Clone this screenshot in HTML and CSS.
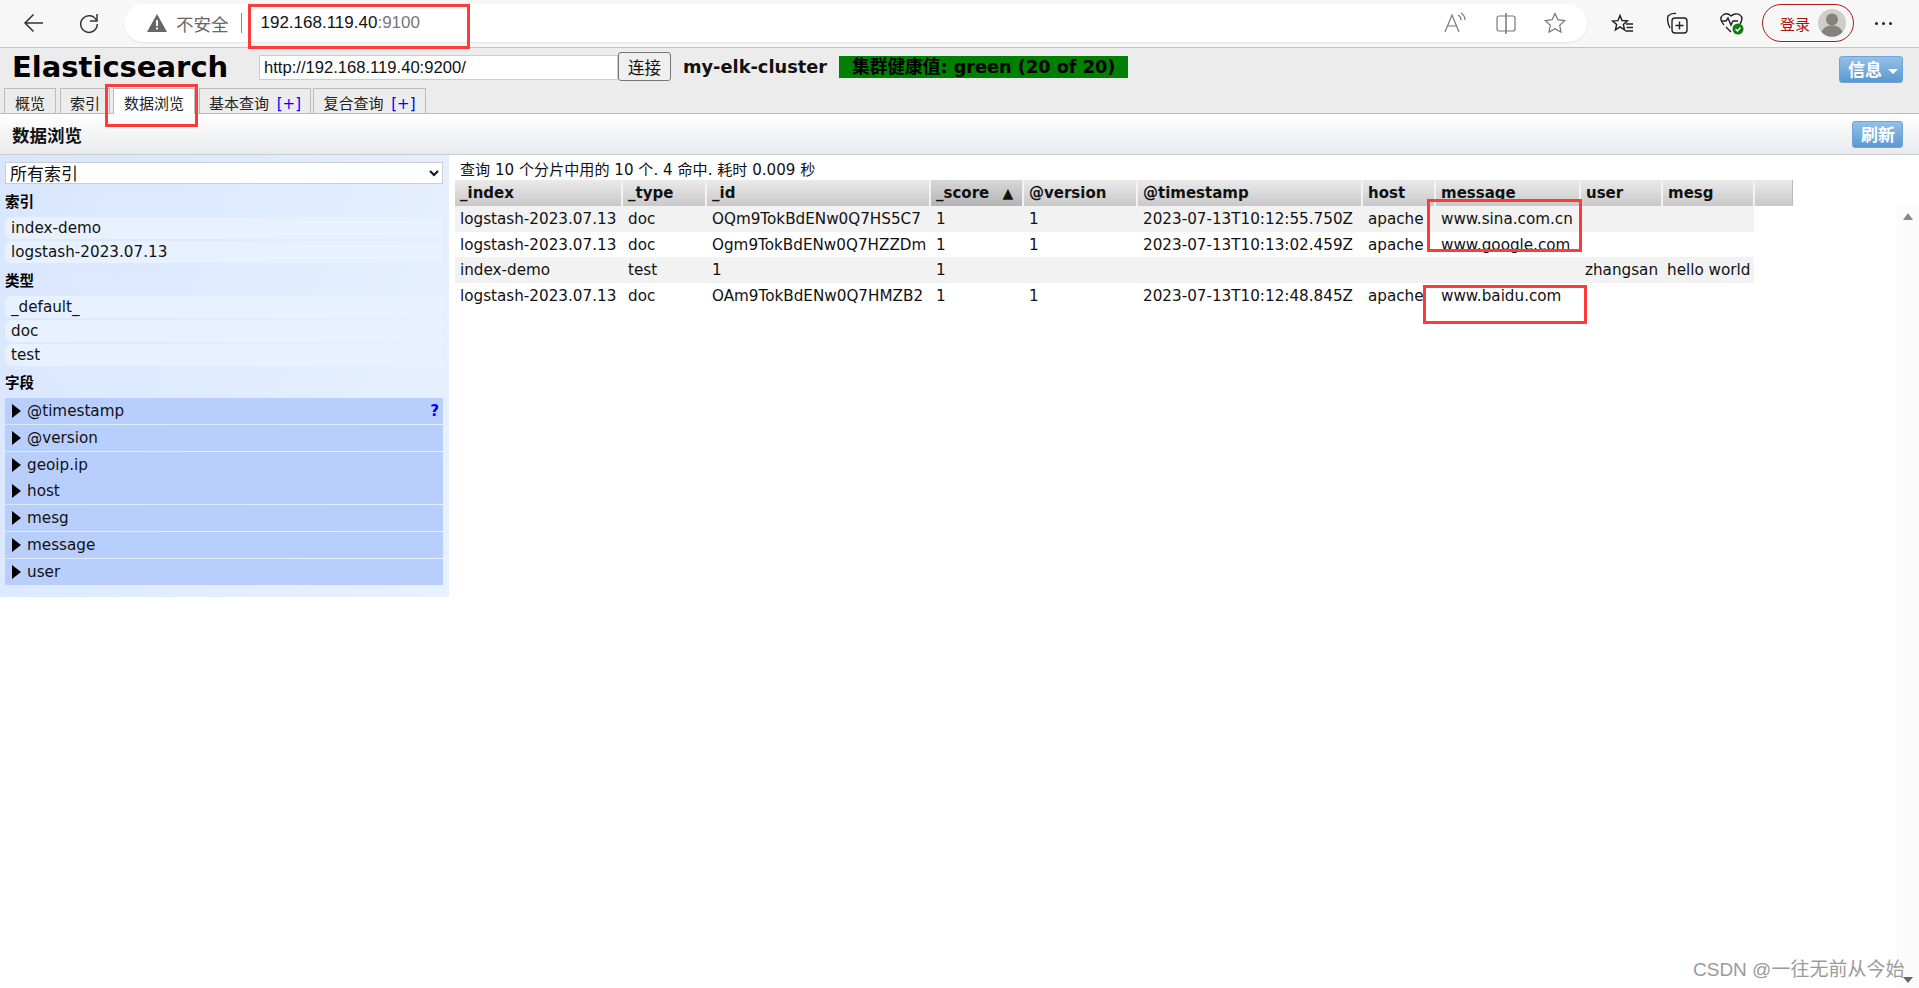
FILE: index.html
```html
<!DOCTYPE html>
<html lang="zh-CN">
<head>
    <meta charset="UTF-8">
    <title>Elasticsearch Head</title>
    <link rel="stylesheet" href="styles.css">
</head>
<body>

    <div class="browser-bar">
        <button class="tool-btn back-btn" aria-label="back">
            <svg width="24" height="24" viewBox="0 0 24 24" fill="none" stroke="#333" stroke-width="1.5"><path d="M21 12H3.500M11.500 3.500L3 12l8.500 8.500"/></svg>
        </button>
        <button class="tool-btn reload-btn" aria-label="reload">
            <svg width="24" height="24" viewBox="0 0 24 24" fill="none" stroke="#333" stroke-width="1.5"><path d="M19.500 9.500A8.300 8.300 0 1 0 20.300 13"/><path d="M20 3v7h-7"/></svg>
        </button>
        <div class="address">
            <svg class="warn-icon" width="20" height="18" viewBox="0 0 20 18"><path fill="#666" d="M10 0l10 18H0z"/><path fill="#f7f7f7" d="M9 6h2v6H9zM9 13.500h2v2H9z"/></svg>
            <span class="not-safe">不安全</span>
            <span class="addr-sep"></span>
            <span class="addr-host">192.168.119.40</span><span class="addr-port">:9100</span>
            <div class="addr-icons">
                <svg width="26" height="24" viewBox="0 0 26 24" fill="none" stroke="#777" stroke-width="1.2"><path d="M2 21L9 4l7 17M4.500 15h9"/><path d="M15 4c2 1 3 3 3 5M18 2c2.500 1.500 4 4 4 7"/></svg>
                <svg width="24" height="24" viewBox="0 0 24 24" fill="none" stroke="#777" stroke-width="1.2"><rect x="3" y="5" width="18" height="15" rx="2"/><path d="M12 2v21" stroke-width="1.500"/></svg>
                <svg width="24" height="24" viewBox="0 0 24 24" fill="none" stroke="#777" stroke-width="1.2"><path d="M12 2.500l2.900 6.200 6.800.9-5 4.700 1.300 6.700-6-3.300-6 3.300 1.300-6.700-5-4.700 6.800-.9z"/></svg>
            </div>
        </div>
        <div class="bar-icons">
            <svg width="24" height="24" viewBox="0 0 24 24" fill="none" stroke="#222" stroke-width="1.4"><path d="M9 2.500l2 5 5.500.4-4.200 3.600 1.300 5.400-4.600-3-4.600 3 1.300-5.400L1.500 8l5.500-.4zM15 11h7M15.500 14.500H22M14.500 18H22" transform="translate(0 2)"/></svg>
            <svg width="24" height="24" viewBox="0 0 24 24" fill="none" stroke="#222" stroke-width="1.4"><path d="M5 17C3 13 2 9 3 5c2-2 5-3 8-2.500"/><rect x="7" y="7" width="15" height="15" rx="3"/><path d="M14.500 10.500v8M10.500 14.500h8"/></svg>
            <svg width="26" height="24" viewBox="0 0 26 24" fill="none" stroke="#222" stroke-width="1.4"><path d="M5 14C1 10 1 6 4 4s6-1 8 1c2-2 6-3 9-1s2 6 0 9"/><path d="M2 10h5l2-3 3 7 2-4h5"/><path d="M7 16l5 5"/><circle cx="19" cy="18" r="5.500" fill="#107c10" stroke="none"/><path d="M16.500 18l2 2 3-3.500" stroke="#fff"/></svg>
        </div>
        <div class="login-pill">
            <span class="login-text">登录</span>
            <svg class="avatar" width="28" height="28" viewBox="0 0 28 28"><circle cx="14" cy="14" r="14" fill="#cfcdca"/><circle cx="14" cy="10.500" r="6" fill="#85817d"/><path fill="#85817d" d="M3.500 23c2-5 6-6.500 10.500-6.500S22.500 18 24.500 23a14 14 0 0 1-21 0z"/></svg>
        </div>
        <div class="more-dots"><i></i><i></i><i></i></div>
    </div>

    <header class="es-header">
        <div class="es-top">
            <h1 class="es-title">Elasticsearch</h1>
            <input class="es-url" type="text" value="http://192.168.119.40:9200/">
            <button class="es-connect">连接</button>
            <span class="es-cluster">my-elk-cluster</span>
            <span class="es-health">集群健康值: green (20 of 20)</span>
            <button class="blue-btn info-btn">信息 <i class="caret"></i></button>
        </div>
        <nav class="es-tabs">
            <a class="tab tab-1">概览</a>
            <a class="tab tab-2">索引</a>
            <a class="tab tab-3 active">数据浏览</a>
            <a class="tab tab-4">基本查询 <b>[+]</b></a>
            <a class="tab tab-5">复合查询 <b>[+]</b></a>
        </nav>
    </header>

    <div class="sub-header">
        <h2>数据浏览</h2>
        <button class="blue-btn">刷新</button>
    </div>

    <main class="browser">
        <aside class="sidebar">
            <select class="index-select">
                <option>所有索引</option>
            </select>
            <h3>索引</h3>
            <div class="filter-item">index-demo</div>
            <div class="filter-item">logstash-2023.07.13</div>
            <h3 class="next-head">类型</h3>
            <div class="filter-item">_default_</div>
            <div class="filter-item">doc</div>
            <div class="filter-item">test</div>
            <h3 class="field-head">字段</h3>
            <div class="field"><i class="arrow"></i>@timestamp<span class="help">?</span></div>
            <div class="field"><i class="arrow"></i>@version</div>
            <div class="field"><i class="arrow"></i>geoip.ip</div>
            <div class="field"><i class="arrow"></i>host</div>
            <div class="field"><i class="arrow"></i>mesg</div>
            <div class="field"><i class="arrow"></i>message</div>
            <div class="field"><i class="arrow"></i>user</div>
        </aside>

        <section class="results">
            <p class="summary">查询 10 个分片中用的 10 个. 4 命中. 耗时 0.009 秒</p>
            <table class="result-table">
                <colgroup>
                    <col class="c-index"><col class="c-type"><col class="c-id"><col class="c-score">
                    <col class="c-version"><col class="c-time"><col class="c-host"><col class="c-msg">
                    <col class="c-user"><col class="c-mesg"><col class="c-extra">
                </colgroup>
                <thead>
                    <tr>
                        <th>_index</th>
                        <th>_type</th>
                        <th>_id</th>
                        <th class="sorted">_score <span class="sort-mark">▲</span></th>
                        <th>@version</th>
                        <th>@timestamp</th>
                        <th>host</th>
                        <th>message</th>
                        <th>user</th>
                        <th>mesg</th>
                        <th></th>
                    </tr>
                </thead>
                <tbody>
                    <tr>
                        <td>logstash-2023.07.13</td><td>doc</td><td>OQm9TokBdENw0Q7HS5C7</td><td>1</td><td>1</td>
                        <td>2023-07-13T10:12:55.750Z</td><td>apache</td><td>www.sina.com.cn</td><td></td><td></td>
                    </tr>
                    <tr>
                        <td>logstash-2023.07.13</td><td>doc</td><td>Ogm9TokBdENw0Q7HZZDm</td><td>1</td><td>1</td>
                        <td>2023-07-13T10:13:02.459Z</td><td>apache</td><td>www.google.com</td><td></td><td></td>
                    </tr>
                    <tr>
                        <td>index-demo</td><td>test</td><td>1</td><td>1</td><td></td>
                        <td></td><td></td><td></td><td>zhangsan</td><td>hello world</td>
                    </tr>
                    <tr>
                        <td>logstash-2023.07.13</td><td>doc</td><td>OAm9TokBdENw0Q7HMZB2</td><td>1</td><td>1</td>
                        <td>2023-07-13T10:12:48.845Z</td><td>apache</td><td>www.baidu.com</td><td></td><td></td>
                    </tr>
                </tbody>
            </table>
        </section>

        <div class="scroll-strip">
            <i class="scroll-up"></i>
            <i class="scroll-down"></i>
        </div>
    </main>

    <!-- red marks drawn over the screenshot -->
    <div class="mark mark-url"></div>
    <div class="mark mark-tab"></div>
    <div class="mark mark-msg"></div>
    <div class="mark mark-baidu"></div>

    <div class="watermark">CSDN @一往无前从今始</div>

</body>
</html>
```

FILE: styles.css
```css
* {
    box-sizing: border-box;
}
body {
    margin: 0;
    height: 988px;
    overflow: hidden;
    position: relative;
    background: #fff;
    color: #111;
    font-family: "DejaVu Sans", "Noto Sans CJK SC", sans-serif;
    font-size: 14px;
}

/* browser toolbar */
.browser-bar {
    height: 48px;
    background: #f7f7f7;
    border-bottom: 1px solid #c4c4c4;
    display: flex;
    align-items: center;
    padding: 0 0 1px 22px;
}
.tool-btn {
    width: 24px;
    height: 24px;
    padding: 0;
    border: none;
    background: none;
}
.reload-btn {
    margin-left: 31px;
}
.address {
    margin-left: 23px;
    width: 1463px;
    height: 38px;
    background: #fff;
    border-radius: 19px;
    box-shadow: 0 1px 2px rgba(0, 0, 0, 0.08);
    display: flex;
    align-items: center;
    padding-left: 23px;
    font-family: "Liberation Sans", "Noto Sans CJK SC", sans-serif;
    font-size: 17px;
}
.warn-icon {
    margin-right: 9px;
}
.not-safe {
    color: #666;
    font-size: 17.5px;
}
.addr-sep {
    width: 1px;
    height: 20px;
    background: #888;
    margin: 0 19px 0 12px;
}
.addr-host {
    color: #111;
}
.addr-port {
    color: #777;
}
.addr-icons {
    margin-left: auto;
    margin-right: 20px;
    display: flex;
    gap: 25px;
}
.bar-icons {
    margin-left: 24px;
    display: flex;
    gap: 30px;
}
.login-pill {
    margin-left: 17px;
    width: 92px;
    height: 38px;
    border: 1.5px solid #a81c1c;
    border-radius: 19px;
    display: flex;
    align-items: center;
    padding-left: 17px;
}
.login-text {
    color: #b01010;
    font-family: "Noto Sans CJK SC", sans-serif;
    font-size: 15px;
}
.avatar {
    margin-left: 8px;
}
.more-dots {
    margin-left: 21px;
    display: flex;
    gap: 4px;
}
.more-dots i {
    width: 3px;
    height: 3px;
    border-radius: 50%;
    background: #222;
}

/* elasticsearch head header */
.es-header {
    height: 66px;
    background: #ececec;
    border-bottom: 1px solid #bdbdbd;
    display: flex;
    flex-direction: column;
}
.es-top {
    height: 37px;
    display: flex;
    align-items: center;
    padding: 0 16px 0 12px;
}
.es-title {
    margin: 0;
    width: 247px;
    font-size: 29px;
    font-weight: bold;
    color: #000;
    white-space: nowrap;
}
.es-url {
    width: 359px;
    height: 25px;
    margin-top: 2px;
    border: 1px solid #ccc;
    padding: 0 4px;
    font-family: "Liberation Sans", sans-serif;
    font-size: 16.6px;
    color: #111;
}
.es-connect {
    width: 53px;
    height: 29px;
    padding: 0;
    background: #efefef;
    border: 1px solid #767676;
    border-radius: 3px;
    font-family: "Noto Sans CJK SC", sans-serif;
    font-size: 16.5px;
    color: #111;
}
.es-cluster {
    margin-left: 12px;
    width: 156px;
    font-size: 17.8px;
    font-weight: bold;
    white-space: nowrap;
}
.es-health {
    width: 289px;
    height: 22px;
    background: #008000;
    padding-left: 13px;
    font-size: 17.7px;
    line-height: 22px;
    font-weight: bold;
    color: #000;
    white-space: nowrap;
}
.blue-btn {
    height: 27px;
    padding: 0 7px 2px 8px;
    margin: 0;
    background: linear-gradient(#93c0e8, #5a99cf);
    border: 1px solid #6ea4d6;
    border-radius: 3px;
    color: #fff;
    font-family: "Noto Sans CJK SC", sans-serif;
    font-size: 17px;
    font-weight: bold;
    line-height: 23px;
}
.info-btn {
    margin-left: auto;
    margin-top: 6px;
    width: 64px;
    white-space: nowrap;
    text-align: left;
}
.caret {
    display: inline-block;
    margin-left: 2px;
    vertical-align: middle;
    border: 5px solid transparent;
    border-top: 5px solid #fff;
    border-bottom: 0;
}
.es-tabs {
    display: flex;
    align-items: flex-end;
    margin-top: auto;
    height: 25px;
    padding-left: 4px;
    font-size: 15px;
}
.tab {
    height: 25px;
    border: 1px solid #bdbdbd;
    border-bottom: none;
    background: #ececec;
    color: #222;
    text-align: center;
    line-height: 30px;
    white-space: nowrap;
    overflow: hidden;
}
.tab b {
    margin-left: 3px;
    font-weight: normal;
    color: #00f;
}
.tab.active {
    background: #fff;
    height: 26px;
    margin-bottom: -1px;
}
.tab-1 {
    width: 52px;
}
.tab-2 {
    width: 50px;
    margin-left: 4px;
}
.tab-3 {
    width: 82px;
    margin-left: 3px;
}
.tab-4 {
    width: 112px;
    margin-left: 4px;
}
.tab-5 {
    width: 113px;
    margin-left: 2px;
}

.sub-header {
    height: 41px;
    background: linear-gradient(#fff, #e8ebee);
    border-bottom: 1px solid #ccc;
    display: flex;
    align-items: center;
    justify-content: space-between;
    padding: 0 16px 0 12px;
    font-family: "Noto Sans CJK SC", sans-serif;
}
.sub-header h2 {
    margin: 0;
    font-size: 17.5px;
    font-weight: bold;
}

/* main area */
.browser {
    display: flex;
    align-items: flex-start;
}
.sidebar {
    width: 449px;
    height: 442px;
    flex: none;
    padding: 7px 6px 0 5px;
    background: linear-gradient(110deg, #d8e6ff, #e8f1ff);
    font-size: 15.2px;
}
.index-select {
    display: block;
    width: 100%;
    height: 22px;
    padding: 0;
    background: #fff;
    border: 1px solid #ccc;
    border-radius: 0;
    font-family: "DejaVu Sans", "Noto Sans CJK SC", sans-serif;
    font-size: 17px;
    color: #111;
}
.sidebar h3 {
    margin: 0;
    height: 33px;
    line-height: 33px;
    font-family: "Noto Sans CJK SC", sans-serif;
    font-size: 14.5px;
    font-weight: bold;
    color: #000;
}
.sidebar h3.next-head {
    height: 31px;
    line-height: 29px;
}
.sidebar h3.field-head {
    height: 30px;
    line-height: 28px;
}
.filter-item {
    height: 22px;
    margin-bottom: 2px;
    padding-left: 6px;
    line-height: 22px;
    background: #e7f1ff;
    border-radius: 6px 0 0 6px;
}
.field {
    height: 26px;
    margin-bottom: 0.8px;
    display: flex;
    align-items: center;
    background: #b8cffd;
    padding-left: 7px;
}
.arrow {
    width: 0;
    height: 0;
    margin-right: 6px;
    border-left: 9px solid #000;
    border-top: 7px solid transparent;
    border-bottom: 7px solid transparent;
}
.help {
    margin-left: auto;
    margin-right: 4px;
    color: #00f;
    font-weight: bold;
}
.results {
    flex: 1;
    min-width: 0;
    margin-left: 6px;
}
.summary {
    margin: 0;
    height: 25px;
    padding: 7px 0 0 5px;
    font-size: 15.1px;
    line-height: 16px;
    white-space: nowrap;
}
.result-table {
    table-layout: fixed;
    border-collapse: collapse;
    width: 1337px;
    font-size: 15.2px;
}
.c-index { width: 167px; }
.c-type { width: 84px; }
.c-id { width: 224px; }
.c-score { width: 93px; }
.c-version { width: 114px; }
.c-time { width: 225px; }
.c-host { width: 73px; }
.c-msg { width: 145px; }
.c-user { width: 82px; }
.c-mesg { width: 92px; }
.c-extra { width: 38px; }
.result-table th {
    height: 26px;
    padding: 0 5px;
    text-align: left;
    background: linear-gradient(#eaeaea, #c9c9c9);
    border-right: 2px solid #f2f2f2;
    font-size: 15px;
    font-weight: bold;
    white-space: nowrap;
    overflow: hidden;
}
.result-table th:last-child {
    border-right: 1px solid #bbb;
}
.result-table th.sorted {
    background: linear-gradient(#d8d8d8, #b4b4b4);
}
.sort-mark {
    margin-left: 8px;
    font-size: 14px;
}
.result-table td {
    height: 25.500px;
    padding: 1px 5px 0;
    white-space: nowrap;
    overflow: hidden;
}
.result-table td:nth-child(n+2):nth-child(-n+8) {
    padding-left: 6px;
}
.result-table tbody tr:nth-child(odd) td {
    background: #f2f2f2;
}

.scroll-strip {
    flex: none;
    width: 22px;
    height: 833px;
    background: linear-gradient(#fff 50px, #fbfbfb 50px);
    position: relative;
}
.scroll-up {
    position: absolute;
    left: 6px;
    top: 58px;
    border: 5.500px solid transparent;
    border-bottom: 7px solid #888;
    border-top: 0;
}
.scroll-down {
    position: absolute;
    left: 6px;
    bottom: 5px;
    border: 5.500px solid transparent;
    border-top: 6px solid #666;
    border-bottom: 0;
}

/* annotation rectangles on top of the page */
.mark {
    position: absolute;
    border: 3px solid #ff3a3a;
}
.mark-url {
    left: 248px;
    top: 4px;
    width: 222px;
    height: 45px;
}
.mark-tab {
    left: 105px;
    top: 84px;
    width: 93px;
    height: 43px;
}
.mark-msg {
    left: 1427px;
    top: 199px;
    width: 155px;
    height: 53px;
}
.mark-baidu {
    left: 1423px;
    top: 285px;
    width: 164px;
    height: 39px;
}
.watermark {
    position: absolute;
    left: 1693px;
    top: 957px;
    font-family: "Liberation Sans", "Noto Sans CJK SC", sans-serif;
    font-size: 19px;
    line-height: 26px;
    color: #9a9a9a;
    white-space: nowrap;
}
```
